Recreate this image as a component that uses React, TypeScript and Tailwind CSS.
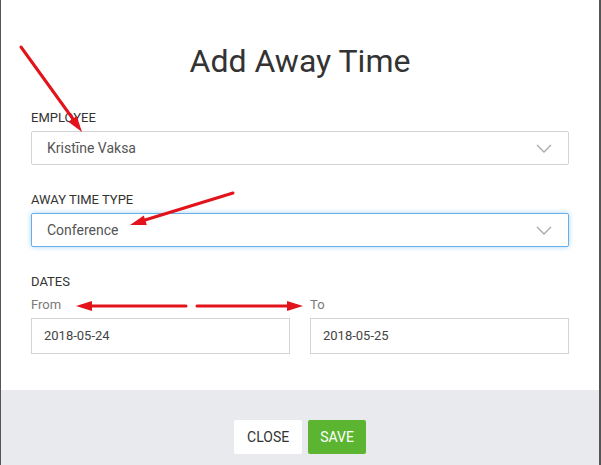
import React from "react";

const font = { fontFamily: "Roboto, 'Noto Sans', Arial, sans-serif" };

function Chevron() {
  return (
    <svg width="16" height="9" viewBox="0 0 16 9" className="shrink-0">
      <polyline points="1,1 8,8 15,1" fill="none" stroke="#a8a8a8" strokeWidth="1.3" />
    </svg>
  );
}

function SelectBox({ value, focused }: { value: string; focused?: boolean }) {
  return (
    <div
      className={
        focused
          ? "mt-[5px] flex h-[34px] items-center justify-between rounded-[2px] border border-[#66afe9] bg-white pl-[15px] pr-[16px] shadow-[0_0_5px_rgba(102,175,233,0.55)]"
          : "mt-[5px] flex h-[34px] items-center justify-between rounded-[2px] border border-[#d3d3d3] bg-white pl-[15px] pr-[16px]"
      }
    >
      <span className="text-[14px] leading-[16px] text-[#555]">{value}</span>
      <Chevron />
    </div>
  );
}

function DateField({ label, value }: { label: string; value: string }) {
  return (
    <div className="flex flex-1 flex-col">
      <div className="mt-[7px] text-[13px] leading-[16px] text-[#7a7a7a]">{label}</div>
      <div className="mt-[5px] flex h-[36px] items-center border border-[#d3d3d3] bg-white pl-[12px]">
        <span className="text-[13px] leading-[16px] text-[#444]">{value}</span>
      </div>
    </div>
  );
}

export default function App() {
  return (
    <div className="relative h-[465px] w-[601px] overflow-hidden bg-white" style={font}>
      <div className="flex h-full flex-col border-l border-r-2 border-l-[#555] border-r-[#555]">
        <div className="flex flex-col bg-white px-[30px] pb-[36px]">
          <h1 className="pt-[41px] text-center text-[32px] font-normal leading-[40px] text-[#333]">
            Add Away Time
          </h1>

          <div className="mt-[29px] text-[13px] uppercase leading-[16px] text-[#333]">Employee</div>
          <SelectBox value="Kristīne Vaksa" />

          <div className="mt-[27px] text-[13px] uppercase leading-[16px] text-[#333]">Away Time Type</div>
          <SelectBox value="Conference" focused />

          <div className="mt-[27px] text-[13px] uppercase leading-[16px] text-[#333]">Dates</div>
          <div className="flex gap-[20px]">
            <DateField label="From" value="2018-05-24" />
            <DateField label="To" value="2018-05-25" />
          </div>
        </div>

        <div className="flex flex-1 justify-center gap-[6px] bg-[#e9eaed] pt-[30px]">
          <button className="h-[34px] rounded-[2px] bg-white px-[13px] text-[14px] uppercase leading-[16px] text-[#333]">
            Close
          </button>
          <button className="h-[34px] rounded-[2px] bg-[#5cb531] px-[12px] text-[14px] uppercase leading-[16px] text-white">
            Save
          </button>
        </div>
      </div>

      {/* red annotation arrows */}
      <svg
        className="pointer-events-none absolute left-0 top-0"
        width="601"
        height="465"
        viewBox="0 0 601 465"
      >
        <g stroke="#e3131b" strokeWidth="3" strokeLinecap="round" fill="#e3131b">
          <line x1="21" y1="47" x2="73" y2="119" />
          <polygon points="82,132 68.6,121.9 76.7,116.1" stroke="none" />

          <line x1="233" y1="193" x2="145" y2="220" />
          <polygon points="130,225 143.8,215.4 146.8,225" stroke="none" />

          <line x1="186" y1="306" x2="91" y2="306" />
          <polygon points="76,306 92,301 92,311" stroke="none" />

          <line x1="197" y1="306" x2="288" y2="306" />
          <polygon points="303,306 287,301 287,311" stroke="none" />
        </g>
      </svg>
    </div>
  );
}
